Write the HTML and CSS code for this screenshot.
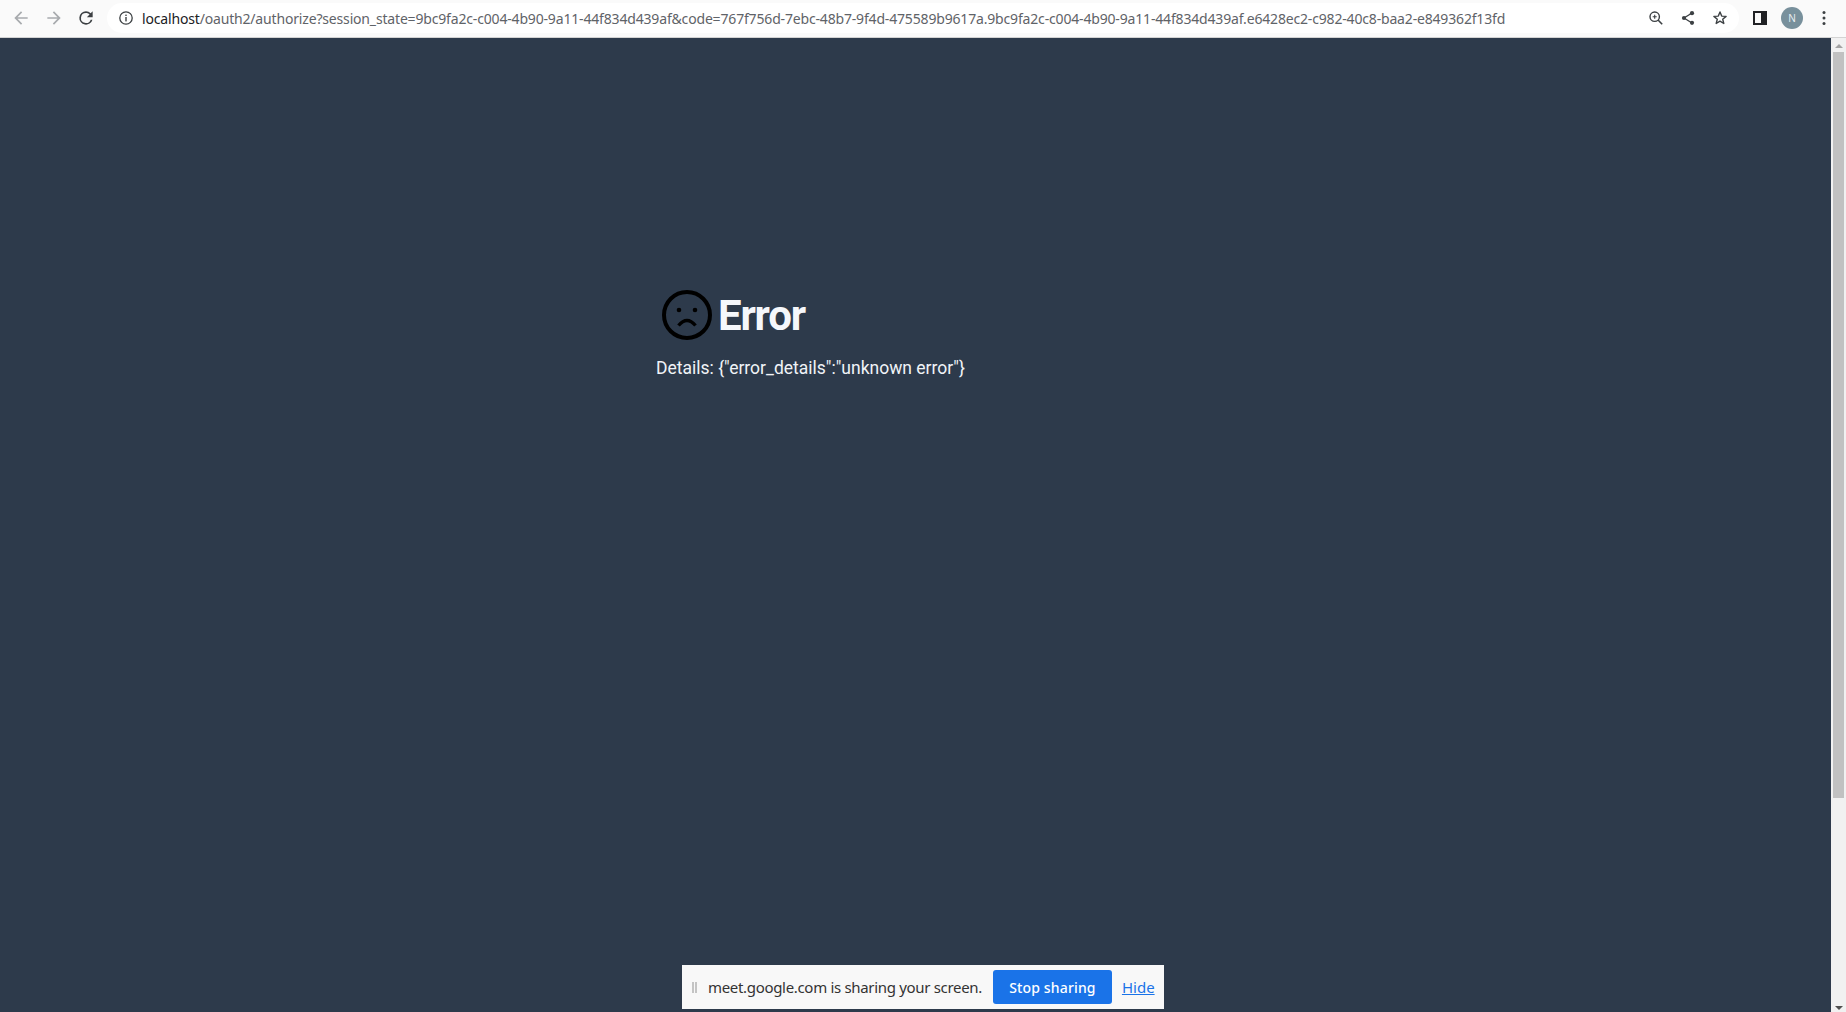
FILE: index.html
```html
<!DOCTYPE html>
<html lang="en">
<head>
<meta charset="utf-8">
<title>Error</title>
<link rel="stylesheet" href="styles.css">
</head>
<body>
<header class="toolbar">
  <svg class="nav-icon faded" viewBox="0 0 24 24"><path d="M20 11H7.83l5.59-5.59L12 4l-8 8 8 8 1.41-1.41L7.83 13H20z"/></svg>
  <svg class="nav-icon faded" viewBox="0 0 24 24"><path d="M4 11h12.17l-5.59-5.59L12 4l8 8-8 8-1.41-1.41L16.17 13H4z"/></svg>
  <svg class="nav-icon reload" viewBox="0 0 24 24"><path d="M17.65 6.35A7.96 7.96 0 0 0 12 4a8 8 0 1 0 7.73 10h-2.08A6 6 0 1 1 12 6c1.66 0 3.14.69 4.22 1.78L13 11h7V4z"/></svg>
  <div class="omnibox">
    <svg class="info" viewBox="0 0 16 16"><circle cx="8" cy="8" r="6.2" fill="none" stroke="#3c4043" stroke-width="1.3"/><rect x="7.3" y="7" width="1.4" height="4.4" fill="#3c4043"/><rect x="7.3" y="4.6" width="1.4" height="1.4" fill="#3c4043"/></svg>
    <div class="url"><span class="host">localhost</span>/oauth2/authorize?session_state=9bc9fa2c-c004-4b90-9a11-44f834d439af&amp;code=767f756d-7ebc-48b7-9f4d-475589b9617a.9bc9fa2c-c004-4b90-9a11-44f834d439af.e6428ec2-c982-40c8-baa2-e849362f13fd</div>
    <div class="omni-actions">
      <svg class="tool-icon" viewBox="0 0 16 16"><circle cx="6.7" cy="6.7" r="4.7" fill="none" stroke="#3c4043" stroke-width="1.4"/><path d="M10 10l4.2 4.2" stroke="#3c4043" stroke-width="1.6" fill="none"/><path d="M4.7 6.7h4M6.7 4.7v4" stroke="#3c4043" stroke-width="1.1" fill="none"/></svg>
      <svg class="tool-icon" viewBox="0 0 16 16"><path d="M12 3L4 8l8 5" fill="none" stroke="#3c4043" stroke-width="1.3"/><circle cx="12" cy="3.2" r="2.1" fill="#3c4043"/><circle cx="4" cy="8" r="2.1" fill="#3c4043"/><circle cx="12" cy="12.8" r="2.1" fill="#3c4043"/></svg>
      <svg class="tool-icon" viewBox="0 0 16 16"><path d="M8 2l1.7 4.1 4.4.3-3.4 2.8 1.1 4.3L8 11.2l-3.8 2.3 1.1-4.3-3.4-2.8 4.4-.3z" fill="none" stroke="#3c4043" stroke-width="1.4" stroke-linejoin="round"/></svg>
    </div>
  </div>
  <div class="chrome-actions">
    <svg class="panel" viewBox="0 0 14 14"><rect x="1" y="1" width="12" height="12" fill="none" stroke="#202124" stroke-width="2"/><rect x="8" y="1" width="5" height="12" fill="#202124"/></svg>
    <div class="avatar">N</div>
    <svg class="dots" viewBox="0 0 4 16"><circle cx="2" cy="2.5" r="1.5"/><circle cx="2" cy="8" r="1.5"/><circle cx="2" cy="13.5" r="1.5"/></svg>
  </div>
</header>
<div class="viewport">
  <main class="page">
    <div class="error">
      <h1 class="error-title">
        <svg class="sad" viewBox="0 0 50 50"><circle cx="25" cy="25" r="23" fill="none" stroke="#000" stroke-width="4"/><circle cx="17" cy="20" r="2.3"/><circle cx="33" cy="20" r="2.3"/><path d="M16.5 35.5 Q25 25.5 33.5 35.5" fill="none" stroke="#000" stroke-width="3.4"/></svg>
        <span>Error</span>
      </h1>
      <p class="error-details">Details: {"error_details":"unknown error"}</p>
    </div>
    <div class="share-bar">
      <span class="grip"></span>
      <span class="share-text">meet.google.com is sharing your screen.</span>
      <span class="stop">Stop sharing</span>
      <a class="hide" href="#">Hide</a>
    </div>
  </main>
  <aside class="scrollbar">
    <span class="arrow up"></span>
    <div class="track"><div class="thumb"></div></div>
    <span class="arrow down"></span>
  </aside>
</div>
</body>
</html>
```
FILE: styles.css
```css
* { box-sizing: border-box; }
html, body { margin: 0; height: 100%; overflow: hidden; }
body { display: flex; flex-direction: column; font-family: Roboto, sans-serif; background: #2d3a4b; }

.toolbar { height: 38px; flex: none; display: flex; align-items: center; background: #fafafa; border-bottom: 1px solid #d3d3d3; padding: 0 14px 1px 11px; }
.nav-icon { width: 20px; height: 20px; margin-right: 13px; fill: #3c4043; flex: none; }
.nav-icon.faded { fill: #a8abae; }
.nav-icon.reload { margin-left: -1px; margin-right: 11px; }
.omnibox { flex: none; width: 1632px; height: 30px; border-radius: 15px; background: #fff; display: flex; align-items: center; padding-left: 11px; }
.info { width: 16px; height: 16px; flex: none; }
.url { flex: none; width: 1365px; margin-left: 8px; font-family: "Noto Sans", sans-serif; font-size: 14px; color: #5f6368; white-space: nowrap; letter-spacing: -0.17px; }
.host { color: #202124; }
.omni-actions { display: flex; gap: 13px; margin-left: 141px; }
.tool-icon { width: 16px; height: 16px; flex: none; }
.tool-icon + .tool-icon { margin-left: 3px; }
.chrome-actions { display: flex; align-items: center; margin-left: 14px; }
.panel { width: 14px; height: 14px; }
.avatar { width: 22px; height: 22px; margin-left: 14px; border-radius: 50%; background: #78909c; color: #e8eef1; font: 10px "Noto Sans", sans-serif; display: flex; align-items: center; justify-content: center; }
.dots { width: 4px; height: 16px; margin-left: 19px; fill: #3c4043; }

.viewport { flex: 1; display: flex; min-height: 0; }
.page { flex: 1; position: relative; background: #2d3a4b; padding: 250px 0 0 656px; }
.error { color: #fff; }
.error-title { margin: 0; display: flex; align-items: center; gap: 6px; padding-left: 6px; font-size: 42px; font-weight: 700; line-height: 56px; letter-spacing: -1.2px; color: #f5f7fb; }
.sad { width: 50px; height: 50px; flex: none; margin-top: -3px; }
.error-details { margin: 12px 0 0; font-size: 17.5px; line-height: 24px; color: #f0f3f7; }

.share-bar { position: absolute; left: 682px; bottom: 3px; width: 482px; height: 44px; background: #f8f8f8; display: flex; align-items: center; padding-left: 10px; font-family: "Noto Sans", sans-serif; }
.grip { width: 5px; height: 11px; border-left: 2px solid #c4c4c4; border-right: 2px solid #c4c4c4; }
.share-text { margin-left: 11px; font-size: 15px; letter-spacing: -0.32px; color: #333; white-space: nowrap; }
.stop { margin-left: 11px; width: 119px; height: 34px; border-radius: 3px; background: #1a73e8; color: #fff; font-size: 14px; font-weight: 500; letter-spacing: 0.15px; display: flex; align-items: center; justify-content: center; }
.hide { margin-left: 10px; font-size: 15px; color: #1a73e8; }

.scrollbar { width: 15px; flex: none; background: #f1f1f1; display: flex; flex-direction: column; align-items: center; padding: 6px 0 2px; }
.track { flex: 1; width: 100%; padding: 4px 2px 0; }
.thumb { height: 746px; background: #c1c1c1; }
.arrow { width: 0; height: 0; border-left: 4px solid transparent; border-right: 4px solid transparent; flex: none; }
.arrow.up { border-bottom: 4px solid #a3a3a3; }
.arrow.down { border-top: 4px solid #505050; }
```
